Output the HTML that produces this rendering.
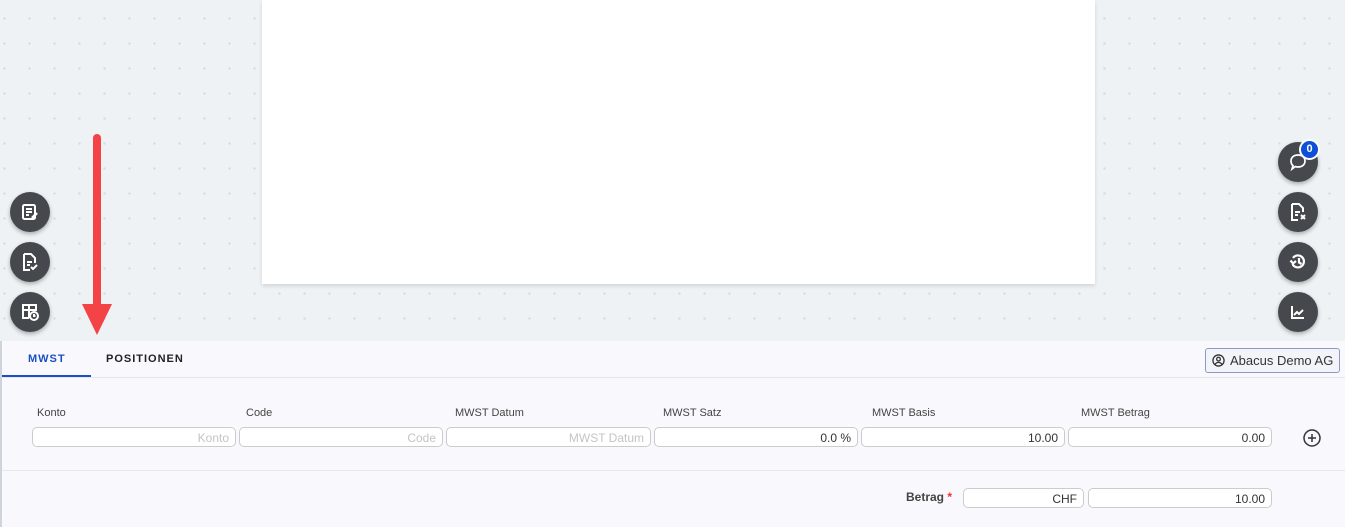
<!DOCTYPE html>
<html><head><style>
*{box-sizing:border-box;margin:0;padding:0}
body{width:1345px;height:527px;overflow:hidden;font-family:"Liberation Sans",sans-serif;background:#eef2f5;position:relative}
.dots{position:absolute;left:0;top:0;width:1345px;height:341px;background-image:radial-gradient(circle,#d3d8df 1px,transparent 1.3px);background-size:25px 25px;background-position:-8px 6px}
.sheet{position:absolute;left:262px;top:0;width:833px;height:284px;background:#fff;box-shadow:0 2px 4px rgba(0,0,0,.12)}
.fab{position:absolute;width:40px;height:40px;border-radius:50%;background:#45484d;box-shadow:0 2px 4px rgba(0,0,0,.3);display:flex;align-items:center;justify-content:center}
.fab svg{width:20px;height:20px}
.panel{position:absolute;left:0;top:341px;width:1345px;height:186px;background:#f9f9fd;border-left:2px solid #cfd4dc}
.tabs{height:37px;border-bottom:1px solid #e4e6ec;position:relative}
.tab{position:absolute;top:12px;font-size:11px;font-weight:bold;letter-spacing:1px}
.lbl{position:absolute;top:66px;font-size:11px;color:#444}
.inp{position:absolute;height:20px;border:1px solid #ccc;border-radius:5px;background:#fff;font-size:12px;text-align:right;padding:3px 6px;color:#333}
.ph{color:#c4c4c4}
</style></head><body>
<div class="dots"></div>
<div class="sheet"></div>
<svg style="position:absolute;left:80px;top:130px" width="34" height="208"><line x1="17" y1="8" x2="17" y2="180" stroke="#f44346" stroke-width="8" stroke-linecap="round"/><polygon points="2,174 32,174 17,205" fill="#f44346"/></svg>
<div class="fab" style="left:10px;top:192px"><svg viewBox="0 0 20 20" fill="none" stroke="#fff" stroke-width="2"><rect x="3" y="3" width="12" height="14" rx="1.5"/><path d="M6 7h6M6 10h6M6 13h3"/><path d="M12 16l5-5" stroke-width="2.6"/></svg></div>
<div class="fab" style="left:10px;top:242px"><svg viewBox="0 0 20 20" fill="none" stroke="#fff" stroke-width="2"><path d="M4 2h7l4 4v5M4 2v16h6"/><path d="M7 10h5M7 13h3"/><path d="M11 15l2 2 4-4"/></svg></div>
<div class="fab" style="left:10px;top:292px"><svg viewBox="0 0 20 20" fill="none" stroke="#fff" stroke-width="2"><path d="M9 16H3V3h13v6M3 8h13M9 3v13"/><circle cx="14" cy="14" r="4"/><path d="M14 12v2h1.5"/></svg></div>
<div class="fab" style="left:1278px;top:142px"><svg viewBox="0 0 20 20" fill="none" stroke="#fff" stroke-width="1.7"><path d="M10 3c4.5 0 7 2.6 7 6s-2.5 6-7 6c-1 0-2-.1-2.8-.4L4 17l1-3.3C3.7 12.6 3 11 3 9c0-3.4 2.5-6 7-6z"/></svg></div>
<div style="position:absolute;left:1299px;top:139px;width:21px;height:21px;border-radius:50%;background:#0d4fd6;border:2px solid #fff;color:#fff;font-size:11px;font-weight:bold;text-align:center;line-height:17px">0</div>
<div class="fab" style="left:1278px;top:192px"><svg viewBox="0 0 20 20" fill="none" stroke="#fff" stroke-width="2"><path d="M4 2h7l4 4v4M4 2v16h6"/><path d="M7 10h5M7 13h3"/><path d="M13 13l4 4M17 13l-4 4"/></svg></div>
<div class="fab" style="left:1278px;top:242px"><svg viewBox="0 0 20 20" fill="none" stroke="#fff" stroke-width="2.2"><path d="M4.5 12A6 6 0 1 0 5 6"/><path d="M2.5 8.5l2.5 3 3-2.5"/><path d="M11 6v4.5l2.5 1.5"/></svg></div>
<div class="fab" style="left:1278px;top:292px"><svg viewBox="0 0 20 20" fill="none" stroke="#fff" stroke-width="2"><path d="M4 4v12h12"/><path d="M6 13l3-3 2 2 4-4"/></svg></div>
<div class="panel">
 <div class="tabs">
  <div class="tab" style="left:26px;color:#1b4fc4">MWST</div>
  <div style="position:absolute;left:0;top:34px;width:89px;height:2px;background:#1b4fc4"></div>
  <div class="tab" style="left:104px;color:#222">POSITIONEN</div>
  <div style="position:absolute;left:1203px;top:7px;width:135px;height:25px;border:1px solid #8f9ac4;border-radius:3px;background:#f3f4fa;font-size:13px;color:#333;padding:4px 0 0 6px"><svg width="13" height="13" viewBox="0 0 14 14" fill="none" stroke="#333" stroke-width="1.4" style="vertical-align:-2px;margin-right:5px"><circle cx="7" cy="7" r="6"/><circle cx="7" cy="5.5" r="2"/><path d="M3.2 11.3c1-1.6 2.3-2.3 3.8-2.3s2.8.7 3.8 2.3"/></svg>Abacus Demo AG</div>
 </div>
 <div class="lbl" style="left:35px">Konto</div>
 <div class="lbl" style="left:244px">Code</div>
 <div class="lbl" style="left:453px">MWST Datum</div>
 <div class="lbl" style="left:661px">MWST Satz</div>
 <div class="lbl" style="left:870px">MWST Basis</div>
 <div class="lbl" style="left:1079px">MWST Betrag</div>
 <div class="inp ph" style="left:30px;top:86px;width:204px">Konto</div>
 <div class="inp ph" style="left:237px;top:86px;width:204px">Code</div>
 <div class="inp ph" style="left:444px;top:86px;width:205px">MWST Datum</div>
 <div class="inp" style="left:652px;top:86px;width:204px">0.0 %</div>
 <div class="inp" style="left:859px;top:86px;width:204px">10.00</div>
 <div class="inp" style="left:1066px;top:86px;width:204px">0.00</div>
 <svg style="position:absolute;left:1300px;top:87px" width="20" height="20" fill="none" stroke="#333" stroke-width="1.5"><circle cx="10" cy="10" r="8"/><path d="M10 6v8M6 10h8"/></svg>
 <div style="position:absolute;left:0;top:129px;width:1345px;height:1px;background:#e6e8ee"></div>
 <div style="position:absolute;left:904px;top:149px;font-size:12px;font-weight:bold;color:#444">Betrag <span style="color:#e33">*</span></div>
 <div class="inp" style="left:961px;top:147px;width:121px">CHF</div>
 <div class="inp" style="left:1086px;top:147px;width:184px">10.00</div>
</div>
</body></html>
